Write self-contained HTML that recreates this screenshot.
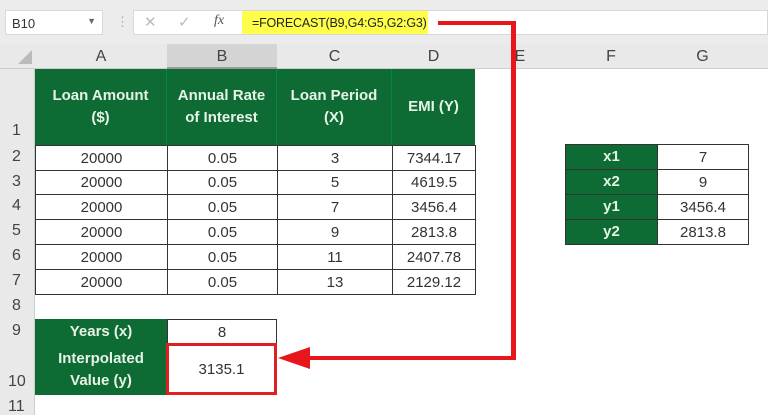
<!DOCTYPE html>
<html><head><style>
body{margin:0;width:768px;height:415px;overflow:hidden;background:#fff;font-family:"Liberation Sans",sans-serif;position:relative}
.a{position:absolute;box-sizing:border-box}
.c{display:flex;align-items:center;justify-content:center;text-align:center;font-size:15px;color:#333}
.g{background:#0e6b34;color:#e6f3e6;font-weight:bold;font-size:15px;line-height:22px}
.b{border:1px solid #333}
.hd{color:#444;font-size:16px}
</style></head><body>
<div class="a" style="left:0;top:0;width:768px;height:44px;background:#ececec"></div>
<div class="a" style="left:5px;top:10px;width:98px;height:25px;background:#fff;border:1px solid #d8d8d8;font-size:13px;padding:5px 0 0 6px;color:#333">B10<span style="position:absolute;right:6px;top:5px;font-size:9px;color:#666">▼</span></div>
<div class="a" style="left:116px;top:14px;font-size:13px;color:#aaa">⋮</div>
<div class="a" style="left:133px;top:10px;width:635px;height:25px;background:#fff;border:1px solid #d8d8d8"></div>
<div class="a" style="left:144px;top:13px;font-size:15px;color:#bbb">✕</div>
<div class="a" style="left:178px;top:13px;font-size:15px;color:#bbb">✓</div>
<div class="a" style="left:214px;top:13px;font-size:14px;color:#555;font-style:italic;font-family:'Liberation Serif',serif">fx</div>
<div class="a" style="left:242px;top:11px;width:186px;height:23px;background:#ffff4a;font-size:12.5px;padding:5px 0 0 10px;color:#222;letter-spacing:-0.2px;white-space:nowrap">=FORECAST(B9,G4:G5,G2:G3)</div>
<!-- column header -->
<div class="a" style="left:0;top:44px;width:768px;height:25px;background:#e9e9e9;border-bottom:1px solid #ccc"></div>
<div class="a" style="left:167px;top:44px;width:110px;height:25px;background:#d4d4d4;border-bottom:2px solid #999"></div>
<div class="a" style="left:0;top:69px;width:35px;height:346px;background:#e9e9e9;border-right:1px solid #ccc"></div>
<div class="a" style="left:18px;top:50px;width:0;height:0;border-left:14px solid transparent;border-bottom:14px solid #bbb"></div>
<div class="a c hd" style="left:35px;top:44px;width:132px;height:25px">A</div>
<div class="a c hd" style="left:167px;top:44px;width:110px;height:25px">B</div>
<div class="a c hd" style="left:277px;top:44px;width:115px;height:25px">C</div>
<div class="a c hd" style="left:392px;top:44px;width:83px;height:25px">D</div>
<div class="a c hd" style="left:475px;top:44px;width:90px;height:25px">E</div>
<div class="a c hd" style="left:565px;top:44px;width:92px;height:25px">F</div>
<div class="a c hd" style="left:657px;top:44px;width:91px;height:25px">G</div>
<div class="a hd" style="left:0;top:0;font-size:16px">
<div class="a" style="left:12px;top:122px">1</div>
<div class="a" style="left:12px;top:148px">2</div>
<div class="a" style="left:12px;top:173px">3</div>
<div class="a" style="left:12px;top:197px">4</div>
<div class="a" style="left:12px;top:222px">5</div>
<div class="a" style="left:12px;top:247px">6</div>
<div class="a" style="left:12px;top:272px">7</div>
<div class="a" style="left:12px;top:297px">8</div>
<div class="a" style="left:12px;top:322px">9</div>
<div class="a" style="left:8px;top:373px">10</div>
<div class="a" style="left:8px;top:398px">11</div>
</div>
<!-- header row -->
<div class="a c g" style="left:35px;top:69px;width:132px;height:76px;border-right:1px solid #084">Loan Amount<br>($)</div>
<div class="a c g" style="left:167px;top:69px;width:110px;height:76px;border-right:1px solid #084">Annual Rate<br>of Interest</div>
<div class="a c g" style="left:277px;top:69px;width:115px;height:76px;border-right:1px solid #084">Loan Period<br>(X)</div>
<div class="a c g" style="left:392px;top:69px;width:83px;height:76px">EMI (Y)</div>
<div class="a" style="left:35px;top:145px">
<table style="border-collapse:collapse;font-size:15px;color:#333;text-align:center;font-family:'Liberation Sans',sans-serif">
<colgroup><col style="width:132px"><col style="width:110px"><col style="width:115px"><col style="width:83px"></colgroup>
<tr style="height:25px"><td class="b">20000</td><td class="b">0.05</td><td class="b">3</td><td class="b">7344.17</td></tr>
<tr style="height:24px"><td class="b">20000</td><td class="b">0.05</td><td class="b">5</td><td class="b">4619.5</td></tr>
<tr style="height:25px"><td class="b">20000</td><td class="b">0.05</td><td class="b">7</td><td class="b">3456.4</td></tr>
<tr style="height:25px"><td class="b">20000</td><td class="b">0.05</td><td class="b">9</td><td class="b">2813.8</td></tr>
<tr style="height:25px"><td class="b">20000</td><td class="b">0.05</td><td class="b">11</td><td class="b">2407.78</td></tr>
<tr style="height:25px"><td class="b">20000</td><td class="b">0.05</td><td class="b">13</td><td class="b">2129.12</td></tr>
</table></div>
<!-- right table -->
<div class="a" style="left:565px;top:144px">
<table style="border-collapse:collapse;font-size:15px;color:#333;text-align:center">
<colgroup><col style="width:92px"><col style="width:91px"></colgroup>
<tr style="height:25px"><td class="b g">x1</td><td class="b">7</td></tr>
<tr style="height:25px"><td class="b g">x2</td><td class="b">9</td></tr>
<tr style="height:25px"><td class="b g">y1</td><td class="b">3456.4</td></tr>
<tr style="height:25px"><td class="b g">y2</td><td class="b">2813.8</td></tr>
</table></div>
<!-- rows 9,10 -->
<div class="a c g" style="left:35px;top:319px;width:132px;height:25px">Years (x)</div>
<div class="a c" style="left:167px;top:319px;width:110px;height:26px;border:1px solid #333">8</div>
<div class="a c g" style="left:35px;top:344px;width:132px;height:51px">Interpolated<br>Value (y)</div>
<div class="a c" style="left:166px;top:343px;width:111px;height:52px;border:3px solid #e02020">3135.1</div>
<!-- arrow -->
<div class="a" style="left:438px;top:21px;width:78px;height:4px;background:#e8161a"></div>
<div class="a" style="left:511px;top:21px;width:5px;height:339px;background:#e8161a"></div>
<div class="a" style="left:305px;top:356px;width:211px;height:4px;background:#e8161a"></div>
<div class="a" style="left:278px;top:347px;width:0;height:0;border-top:11px solid transparent;border-bottom:11px solid transparent;border-right:32px solid #e8161a"></div>
</body></html>
